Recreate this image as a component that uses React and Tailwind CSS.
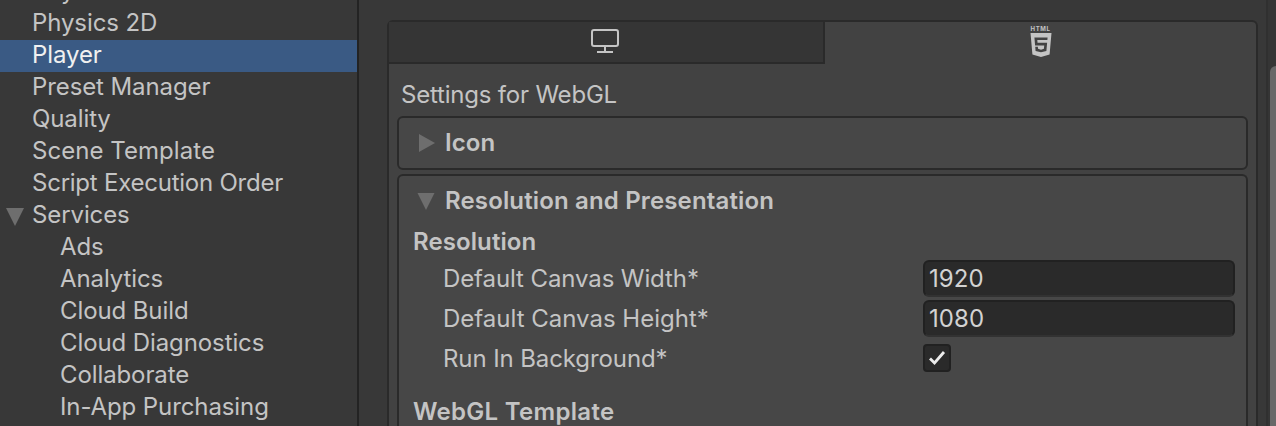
import React from 'react';
import { SiHtml5 } from 'react-icons/si';

const topItems = ['Physics', 'Physics 2D', 'Player', 'Preset Manager', 'Quality', 'Scene Template', 'Script Execution Order'];
const serviceItems = ['Ads', 'Analytics', 'Cloud Build', 'Cloud Diagnostics', 'Collaborate', 'In-App Purchasing'];

const SideRow = ({ label, selected, indent, children }) => (
  <div className={`relative flex h-8 shrink-0 items-center pb-[2px] ${indent ? 'pl-[60px]' : 'pl-[32px]'} ${selected ? 'bg-[#3a5a84] text-[#f0f0f0]' : ''}`}>
    {children}
    <span className={label === 'Script Execution Order' ? 'tracking-[-0.24px]' : label === 'Scene Template' ? 'tracking-[0.05px]' : ''}>{label}</span>
  </div>
);

const Arrow = ({ open, className }) => (
  <svg viewBox="0 0 18 18" className={className}>
    <polygon points={open ? '0,0 18,0 9,18' : '0,0 16,9 0,18'} fill="#6e6e6e" />
  </svg>
);

const NumberRow = ({ label, value }) => (
  <div className="flex h-10 items-center pl-[44px] pr-[11px]">
    <span className={`flex-1 pt-[2px] ${value === '1080' ? 'tracking-normal' : ''}`}>{label}</span>
    <div className="flex h-[37px] w-[312px] items-center rounded-md border-2 border-[#212121] border-b-[#323232] bg-[#2a2a2a] pl-1 pt-[2px] text-[#d2d2d2] tracking-[0.1px]">{value}</div>
  </div>
);

export default function App() {
  return (
    <div className="flex h-[426px] w-[1276px] overflow-hidden bg-[#383838] text-[24px] leading-8 tracking-[-0.1px] text-[#c4c4c4] [font-family:Inter,sans-serif]">
      <aside className="mt-[-24px] flex h-[450px] w-[359px] shrink-0 flex-col border-r-2 border-[#232323]">
        {topItems.map((item) => (
          <SideRow key={item} label={item} selected={item === 'Player'} />
        ))}
        <SideRow label="Services">
          <Arrow open className="absolute left-[6px] top-[8px] h-[18px] w-[18px]" />
        </SideRow>
        {serviceItems.map((item) => (
          <SideRow key={item} label={item} indent />
        ))}
      </aside>

      <main className="flex min-w-0 flex-1">
        <div className="ml-[28px] mt-[20px] flex h-[420px] w-[871px] shrink-0 flex-col rounded-t-md border-2 border-[#2a2a2a] bg-[#424242]">
          <div className="flex h-[42px] shrink-0">
            <div className="flex h-full w-[436px] items-center justify-center border-b-2 border-r-2 border-[#2a2a2a] bg-[#353535] pb-[2px] pr-[2px]">
              <svg width="30" height="26" viewBox="0 0 30 26" fill="none" stroke="#c4c4c4" strokeWidth="2">
                <rect x="2" y="2" width="26" height="16" rx="2" />
                <path d="M15 18v5M7 24h16" />
              </svg>
            </div>
            <div className="flex flex-1 flex-col items-center pt-[4px] text-[#c4c4c4]">
              <span className="h-[7px] text-[6px] font-bold leading-[6px] tracking-[0.6px]">HTML</span>
              <SiHtml5 size={24} />
            </div>
          </div>

          <div className="flex h-[52px] shrink-0 items-center pl-[12px] pt-[10px] tracking-[-0.2px]">Settings for WebGL</div>

          <div className="mx-[8px] mt-0 flex h-[54px] shrink-0 items-center rounded-md border-2 border-[#2a2a2a] bg-[#474747] pl-[20px] font-semibold tracking-[0.1px]">
            <Arrow className="h-[18px] w-[18px] shrink-0" />
            <span className="ml-[8px]">Icon</span>
          </div>

          <div className="mx-[8px] mt-[4px] flex flex-1 flex-col rounded-t-md border-2 border-b-0 border-[#2a2a2a] bg-[#474747] font-normal">
            <div className="flex h-[48px] shrink-0 items-center pl-[18px] pt-[2px] font-semibold tracking-[0.15px]">
              <Arrow open className="h-[17px] w-[18px] shrink-0" />
              <span className="ml-[10px]">Resolution and Presentation</span>
            </div>
            <div className="flex h-[34px] shrink-0 items-center pl-[14px] pt-[2px] font-semibold tracking-[0.1px]">Resolution</div>
            <NumberRow label="Default Canvas Width*" value="1920" />
            <NumberRow label="Default Canvas Height*" value="1080" />
            <div className="flex h-10 items-center pl-[44px] pr-[11px]">
              <span className="flex-1 pt-[2px]">Run In Background*</span>
              <div className="mr-[284px] flex h-[28px] w-[28px] items-center justify-center rounded border-2 border-[#212121] bg-[#2a2a2a]">
                <svg width="18" height="16" viewBox="0 0 18 16" fill="none" stroke="#ececec" strokeWidth="2.8">
                  <path d="M2 8.5l4.5 4.5 9.5-11" />
                </svg>
              </div>
            </div>
            <div className="mt-[18px] flex h-8 shrink-0 items-center pl-[14px] font-semibold tracking-[0.3px]">WebGL Template</div>
          </div>
        </div>
        <div className="ml-[8px] h-full flex-1 border-l-2 border-[#303030] bg-[#353535] pl-[2px] pt-[66px]">
          <div className="h-full rounded-tl-md bg-[#686868]" />
        </div>
      </main>
    </div>
  );
}
